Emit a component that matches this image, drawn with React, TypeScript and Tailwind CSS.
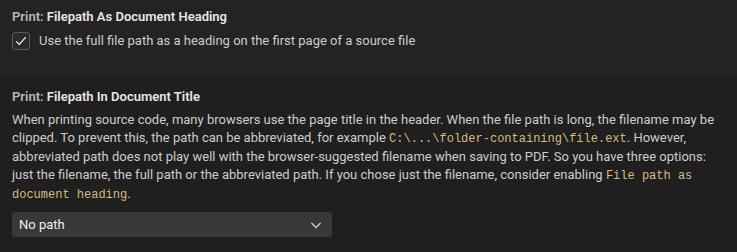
const code = 'font-["Liberation_Mono",monospace] text-[12px] leading-[18px] text-[#d7ba7d]';

export default function App() {
  return (
    <div className="h-[252px] bg-[#1f1f1f] font-['Roboto',sans-serif] text-[13px] leading-[18px] text-[#cccccc]">
      {/* Filepath As Document Heading */}
      <div className="h-[76px] bg-[#232323] px-[12px] pt-[8px]">
        <div className="font-semibold">
          <span className="text-[#b8b8b8]">Print: </span>
          <span className="text-[#e7e7e7]">Filepath As Document Heading</span>
        </div>
        <label className="mt-[6px] flex items-center gap-[9px]">
          <span className="flex h-[18px] w-[18px] items-center justify-center rounded-[3px] border border-[#5a5a5a] bg-[#2b2b2b]">
            <svg width="14" height="14" viewBox="0 0 16 16" fill="none">
              <path d="M2.5 8.5l3.5 3.5 7.5-8.5" stroke="#ffffff" strokeWidth="1.3" />
            </svg>
          </span>
          <span>Use the full file path as a heading on the first page of a source file</span>
        </label>
      </div>

      {/* Filepath In Document Title */}
      <div className="px-[12px] pt-[12px]">
        <div className="font-semibold">
          <span className="text-[#b8b8b8]">Print: </span>
          <span className="text-[#e7e7e7]">Filepath In Document Title</span>
        </div>
        <p className="mt-[5px] pr-[8px]">
          When printing source code, many browsers use the page title in the header. When the file path is long, the
          filename may be clipped. To prevent this, the path can be abbreviated, for example{' '}
          <span className={code}>C:\...\folder-containing\file.ext</span>. However, abbreviated path does not play well
          with the browser-suggested filename when saving to PDF. So you have three options: just the filename, the full
          path or the abbreviated path. If you chose just the filename, consider enabling{' '}
          <span className={code}>File path as document heading</span>.
        </p>
        <div className="mt-[8px] flex h-[25px] w-[320px] items-center justify-between rounded-[3px] bg-[#383838] pl-[7px] pr-[8px] text-[#f0f0f0]">
          <span>No path</span>
          <svg width="16" height="16" viewBox="0 0 16 16" fill="none">
            <path d="M3.5 6l4.5 4.5 4.5-4.5" stroke="#d0d0d0" strokeWidth="1.3" />
          </svg>
        </div>
      </div>
    </div>
  );
}
